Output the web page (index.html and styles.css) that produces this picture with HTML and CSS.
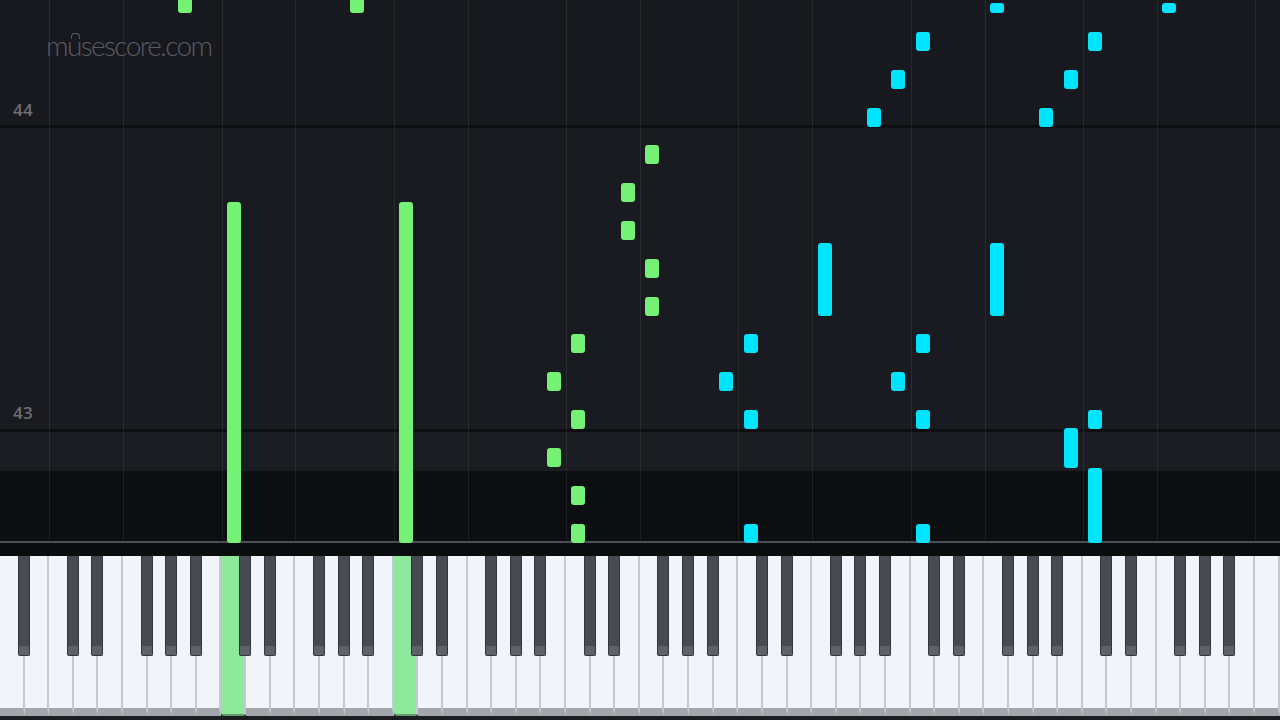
FILE: index.html
```html
<!DOCTYPE html>
<html>
<head>
<meta charset="utf-8">
<title>Piano roll</title>
<link rel="stylesheet" href="styles.css">
</head>
<body>
<div class="screen">
  <div class="roll">
    <div class="lanes">
      <div></div><div></div><div></div><div></div><div></div><div></div><div></div><div></div><div></div><div></div>
      <div></div><div></div><div></div><div></div><div></div><div></div><div></div><div></div><div></div><div></div>
      <div></div><div></div><div></div><div></div><div></div><div></div><div></div><div></div><div></div><div></div>
      <div></div><div></div><div></div><div></div><div></div><div></div><div></div><div></div><div></div><div></div>
      <div></div><div></div><div></div><div></div><div></div><div></div><div></div><div></div><div></div><div></div>
      <div></div><div></div>
    </div>
    <div class="logo">m<span class="hat">u</span>sescore.com</div>
    <div class="measure m44">44</div>
    <div class="measure m43">43</div>

    <div class="n g" style="--k:7;--t:-6"></div>
    <div class="n g" style="--k:14;--t:-6"></div>
    <div class="n g" style="--k:9;--t:202;--h:341"></div>
    <div class="n g" style="--k:16;--t:202;--h:341"></div>
    <div class="n g" style="--k:26;--t:145"></div>
    <div class="n g" style="--k:25;--t:183"></div>
    <div class="n g" style="--k:25;--t:221"></div>
    <div class="n g" style="--k:26;--t:259"></div>
    <div class="n g" style="--k:26;--t:297"></div>
    <div class="n g" style="--k:23;--t:334"></div>
    <div class="n g" style="--k:22;--t:372"></div>
    <div class="n g" style="--k:23;--t:410"></div>
    <div class="n g" style="--k:22;--t:448"></div>
    <div class="n g" style="--k:23;--t:486"></div>
    <div class="n g" style="--k:23;--t:524"></div>

    <div class="n c" style="--k:40;--t:3;--h:10"></div>
    <div class="n c" style="--k:47;--t:3;--h:10"></div>
    <div class="n c" style="--k:37;--t:32"></div>
    <div class="n c" style="--k:36;--t:70"></div>
    <div class="n c" style="--k:35;--t:108"></div>
    <div class="n c" style="--k:44;--t:32"></div>
    <div class="n c" style="--k:43;--t:70"></div>
    <div class="n c" style="--k:42;--t:108"></div>
    <div class="n c" style="--k:33;--t:243;--h:73"></div>
    <div class="n c" style="--k:40;--t:243;--h:73"></div>
    <div class="n c" style="--k:30;--t:334"></div>
    <div class="n c" style="--k:29;--t:372"></div>
    <div class="n c" style="--k:30;--t:410"></div>
    <div class="n c" style="--k:30;--t:524"></div>
    <div class="n c" style="--k:37;--t:334"></div>
    <div class="n c" style="--k:36;--t:372"></div>
    <div class="n c" style="--k:37;--t:410"></div>
    <div class="n c" style="--k:37;--t:524"></div>
    <div class="n c" style="--k:44;--t:410"></div>
    <div class="n c" style="--k:43;--t:428;--h:40"></div>
    <div class="n c" style="--k:44;--t:468;--h:75"></div>
  </div>
  <div class="strip"></div>
  <div class="keys">
    <div class="wk"></div><div class="wk"></div><div class="wk"></div><div class="wk"></div><div class="wk"></div><div class="wk"></div><div class="wk"></div>
    <div class="wk"></div><div class="wk"></div><div class="wk on"></div><div class="wk"></div><div class="wk"></div><div class="wk"></div><div class="wk"></div>
    <div class="wk"></div><div class="wk"></div><div class="wk on"></div><div class="wk"></div><div class="wk"></div><div class="wk"></div><div class="wk"></div>
    <div class="wk"></div><div class="wk"></div><div class="wk"></div><div class="wk"></div><div class="wk"></div><div class="wk"></div><div class="wk"></div>
    <div class="wk"></div><div class="wk"></div><div class="wk"></div><div class="wk"></div><div class="wk"></div><div class="wk"></div><div class="wk"></div>
    <div class="wk"></div><div class="wk"></div><div class="wk"></div><div class="wk"></div><div class="wk"></div><div class="wk"></div><div class="wk"></div>
    <div class="wk"></div><div class="wk"></div><div class="wk"></div><div class="wk"></div><div class="wk"></div><div class="wk"></div><div class="wk"></div>
    <div class="wk"></div><div class="wk"></div><div class="wk"></div>
  </div>
  <div class="floor"></div>
</div>
</body>
</html>
```

FILE: styles.css
```css
* { box-sizing: border-box; }
html, body { margin: 0; padding: 0; background: #0b0c0e; }
.screen {
  width: 1280px;
  height: 720px;
  display: flex;
  flex-direction: column;
  overflow: hidden;
}
.roll {
  position: relative;
  height: 543px;
  flex: none;
  background: linear-gradient(to bottom,
    #18191e 0 125px,
    #0d0e11 125px 128px,
    #191b20 128px 429px,
    #0d0e11 429px 432px,
    #1a1c21 432px 471px,
    #0d0e11 471px 541px,
    #4b4f57 541px 543px);
}
.lanes {
  display: grid;
  grid-template-columns: repeat(52, 1fr);
  height: 541px;
}
.lanes > div:nth-child(7n+3),
.lanes > div:nth-child(7n+6) {
  border-left: 1px solid rgba(255, 255, 255, 0.07);
}
.logo {
  position: absolute;
  left: 46px;
  top: 29px;
  font-family: "Lato", "Roboto", sans-serif;
  font-weight: 300;
  font-size: 28px;
  letter-spacing: -1.6px;
  line-height: 32px;
  color: #585b61;
}
.hat { position: relative; }
.hat::before {
  content: "";
  position: absolute;
  left: 4px;
  top: 5px;
  width: 7px;
  height: 5px;
  border: 1.5px solid #585b61;
  border-bottom: none;
  border-radius: 4px 4px 0 0;
}
.measure {
  position: absolute;
  left: 13px;
  font-family: "Open Sans", "DejaVu Sans", sans-serif;
  font-weight: 600;
  font-size: 17px;
  letter-spacing: 0.3px;
  line-height: 17px;
  color: #6c6f75;
}
.m44 { top: 101px; }
.m43 { top: 404px; }
.n {
  position: absolute;
  z-index: 3;
  width: 14px;
  left: calc((var(--k) + 0.5) * 100% / 52 - 7px);
  top: calc(var(--t) * 1px);
  height: calc(var(--h, 19) * 1px);
  border-radius: 3px;
}
.n.g { background: #75f275; }
.n.c { background: #00e4fd; }
.strip {
  height: 13px;
  flex: none;
  background: #0b0c0e;
}
.keys {
  position: relative;
  display: flex;
  height: 160px;
  flex: none;
  background: #0b0c0e;
}
.wk {
  position: relative;
  flex: 1;
  background: #f1f5fa;
  border-right: 2px solid #c6cad0;
  border-bottom: 8px solid #a3a7ad;
}
.wk.on {
  background: #8fe99c;
  border-bottom: 2px solid #5f9c6a;
  border-radius: 0 0 3px 3px;
}
.wk:nth-child(7n+1)::after,
.wk:nth-child(7n+3):not(:last-child)::after,
.wk:nth-child(7n+4)::after,
.wk:nth-child(7n+6)::after,
.wk:nth-child(7n+7)::after {
  content: "";
  position: absolute;
  z-index: 2;
  top: 0;
  right: -7px;
  width: 10px;
  height: 99px;
  background: linear-gradient(to bottom, #474b51 0 90px, #5e6268 90px);
  border: 1px solid #33363a;
  border-top: none;
  border-radius: 0 0 2px 2px;
}
.floor {
  flex: 1;
  background: #1c1d21;
}
```
